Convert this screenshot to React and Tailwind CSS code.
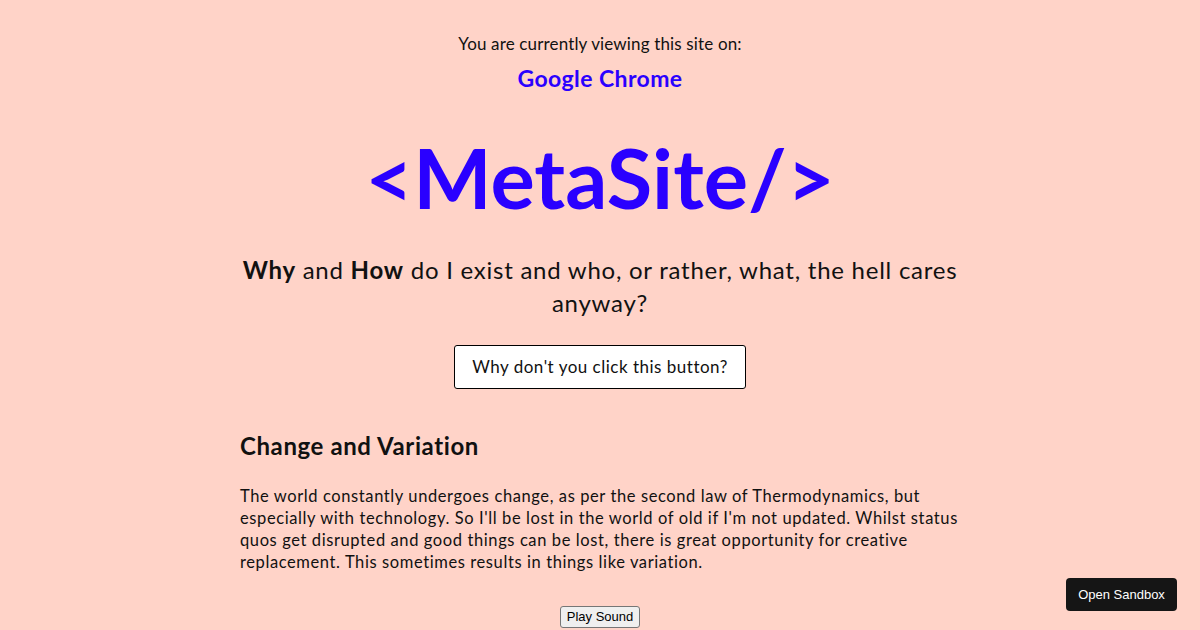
export default function App() {
  const f = { fontFamily: 'Lato, "Noto Sans", sans-serif' };
  return (
    <div className="min-h-[630px] w-full bg-[#ffd3c8] text-[#111]" style={f}>
      <div className="mx-auto flex w-[720px] flex-col items-center pt-[33px]">
        <p className="text-[17px] leading-[22px] tracking-[0.15px]">You are currently viewing this site on:</p>
        <p className="mt-[11px] text-[23px] font-bold leading-[24px] tracking-[0.4px] text-[#2a00ff]">Google Chrome</p>
        <h1 className="mt-[37px] text-[83px] font-bold leading-[100px] text-[#2a00ff]">&lt;MetaSite/&gt;</h1>
        <p className="mt-[26px] text-center text-[24px] leading-[33px] tracking-[0.75px]">
          <b>Why</b> and <b>How</b> do I exist and who, or rather, what, the hell cares anyway?
        </p>
        <button className="mt-[26px] h-[44px] rounded-[3px] border border-black bg-white px-[17px] text-[17px] tracking-[0.5px]">
          Why don't you click this button?
        </button>
        <h2 className="mt-[42px] self-start text-[24px] font-bold leading-[30px] tracking-[0.6px]">Change and Variation</h2>
        <p className="mt-[24px] self-start text-[16.5px] leading-[22px] tracking-[0.6px]">
          The world constantly undergoes change, as per the second law of Thermodynamics, but especially with technology. So I'll be lost in the world of old if I'm not updated. Whilst status quos get disrupted and good things can be lost, there is great opportunity for creative replacement. This sometimes results in things like variation.
        </p>
        <button
          className="mt-[33px] rounded-[3px] border border-[#767676] bg-[#efefef] px-[6px] py-[1px] text-[13px] leading-[18px] text-black"
          style={{ fontFamily: '"Liberation Sans", Arial, sans-serif' }}
        >
          Play Sound
        </button>
      </div>
      <div
        className="fixed bottom-[19px] right-[23px] flex h-[33px] w-[111px] items-center justify-center rounded-[4px] bg-[#151515] text-[13px] text-white"
        style={{ fontFamily: '"Liberation Sans", Arial, sans-serif' }}
      >
        Open Sandbox
      </div>
    </div>
  );
}
